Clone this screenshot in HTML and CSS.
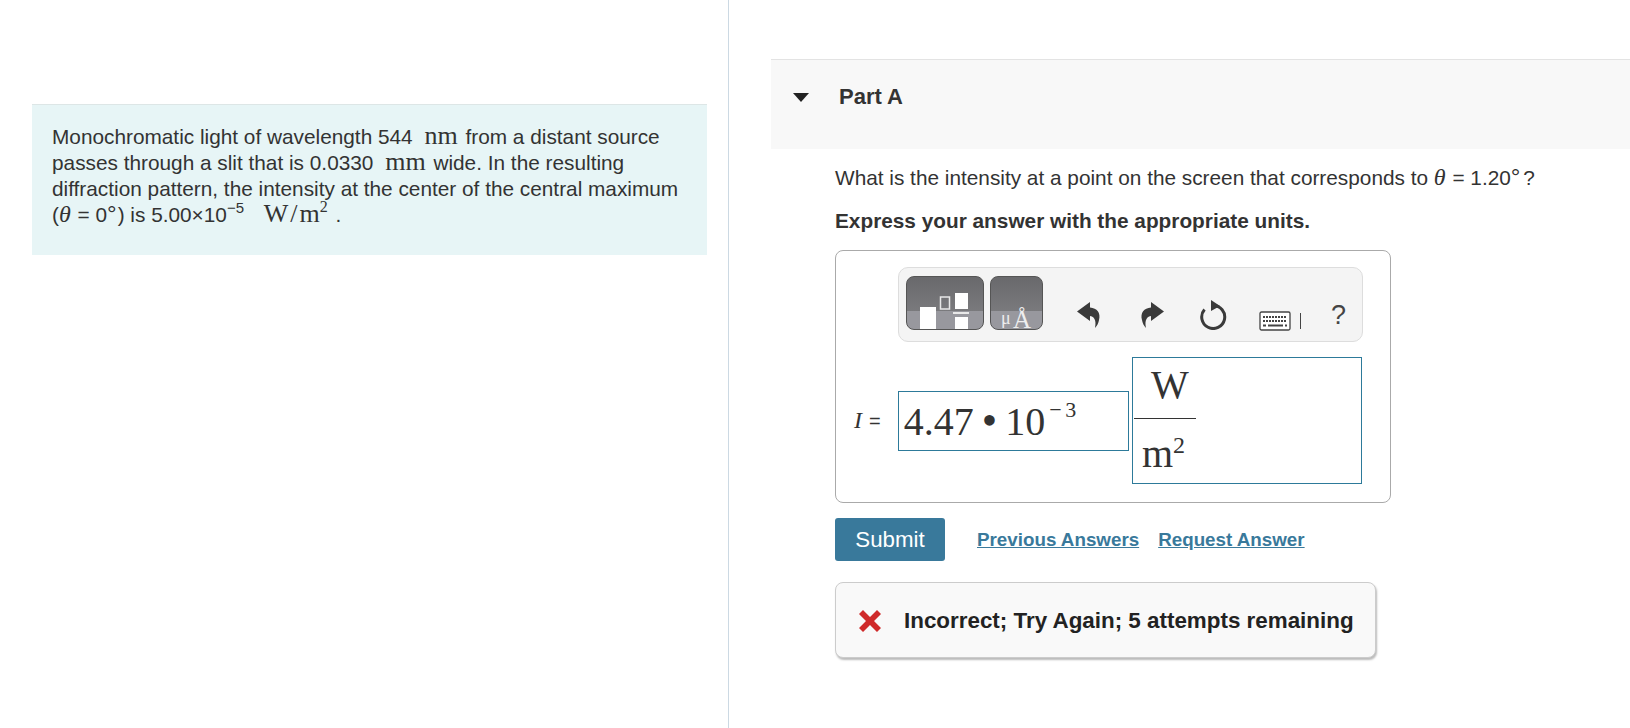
FILE: index.html
```html
<!DOCTYPE html>
<html lang="en">
<head>
    <meta charset="UTF-8">
    <meta name="viewport" content="width=device-width, initial-scale=1.0">
    <title>Part A</title>
    <link rel="stylesheet" href="styles.css">
</head>
<body>
    <div class="page">
        <div class="left-col">
            <div class="intro">
                Monochromatic light of wavelength 544 <span class="unit">nm</span> from a distant source<br>
                passes through a slit that is 0.0330 <span class="unit">mm</span> wide. In the resulting<br>
                diffraction pattern, the intensity at the center of the central maximum<br>
                (<i class="theta">θ</i> = 0<span class="deg">°</span>) is 5.00×10<sup class="exp">−5</sup> <span class="unit unit-wide">W<span class="slash">/</span>m<sup class="unit-exp">2</sup></span> .
            </div>
        </div>
        <div class="right-col">
            <div class="part-head">
                <svg class="caret" width="16" height="9" viewBox="0 0 16 9"><path d="M0 0H16L8 9Z" fill="#222"/></svg>
                <span class="part-title">Part A</span>
            </div>
            <div class="part-body">
                <p class="question">What is the intensity at a point on the screen that corresponds to <i class="theta">θ</i> = 1.20<span class="deg">°</span> ?</p>
                <p class="instruct">Express your answer with the appropriate units.</p>
                <div class="answer-box">
                    <div class="toolbar">
                        <div class="tpl-btn tpl-wide">
                            <svg width="77" height="53" viewBox="0 0 77 53">
                                <rect x="13" y="30" width="16" height="22" fill="#fff"/>
                                <rect x="33.5" y="20" width="9" height="12" fill="none" stroke="#e8e8e8" stroke-width="1.5"/>
                                <rect x="48" y="16" width="13" height="16" fill="#fff"/>
                                <rect x="46" y="35" width="16" height="2" fill="#e8e8e8"/>
                                <rect x="48" y="40" width="13" height="12" fill="#fff"/>
                            </svg>
                        </div>
                        <div class="tpl-btn tpl-narrow">
                            <span class="mu">μ</span><span class="angstrom">Å</span>
                        </div>
                        <div class="tool-icons">
                            <svg class="tool undo" width="24" height="26" viewBox="0 0 24 26"><path d="M0 9.5L13 0V5.5C20 6 24 11 22 18C21.5 21 20 24 18 26C19 21 19 15 13 14V19Z" fill="#3a3a3a"/></svg>
                            <svg class="tool redo" width="24" height="26" viewBox="0 0 24 26"><path transform="matrix(-1 0 0 1 24 0)" d="M0 9.5L13 0V5.5C20 6 24 11 22 18C21.5 21 20 24 18 26C19 21 19 15 13 14V19Z" fill="#3a3a3a"/></svg>
                            <svg class="tool reload" width="28" height="30" viewBox="0 0 28 30"><path d="M14 5.5A11.5 11.5 0 1 1 5.5 9.5" fill="none" stroke="#3a3a3a" stroke-width="3"/><path d="M12 0L21 6L12 11Z" fill="#3a3a3a"/></svg>
                            <svg class="keys" width="42" height="20" viewBox="0 0 42 20">
                                <rect x="1" y="1" width="30" height="18" rx="1.5" fill="#fff" stroke="#444" stroke-width="1.3"/>
                                <path d="M4 6H28M4 10H28" stroke="#444" stroke-width="2" stroke-dasharray="2 1"/>
                                <path d="M9 14.5H24" stroke="#444" stroke-width="2"/>
                                <path d="M4 14.5H7M26 14.5H28" stroke="#444" stroke-width="2"/>
                                <path d="M41.5 2V18" stroke="#444" stroke-width="1"/>
                            </svg>
                            <span class="help">?</span>
                        </div>
                    </div>
                    <div class="equation">
                        <span class="eq-label"><i>I</i><span class="eq-sign">=</span></span>
                        <div class="value-box">4.47 <span class="dot">•</span> 10<sup class="value-exp">− 3</sup></div>
                        <div class="units-box">
                            <div class="fraction">
                                <span class="numer">W</span>
                                <span class="denom">m<sup class="denom-exp">2</sup></span>
                            </div>
                        </div>
                    </div>
                </div>
                <div class="actions">
                    <button class="submit">Submit</button>
                    <a class="action-link" href="#">Previous Answers</a>
                    <a class="action-link" href="#">Request Answer</a>
                </div>
                <div class="feedback">
                    <svg width="24" height="24" viewBox="0 0 24 24"><path d="M5 1L12 8L19 1L23 5L16 12L23 19L19 23L12 16L5 23L1 19L8 12L1 5Z" fill="#cf2a2a"/></svg>
                    <span>Incorrect; Try Again; 5 attempts remaining</span>
                </div>
            </div>
        </div>
    </div>
</body>
</html>
```

FILE: styles.css
```css
* {
    box-sizing: border-box;
}

body {
    margin: 0;
    font-family: "Liberation Sans", Arial, sans-serif;
    color: #333;
    background: #fff;
}

.page {
    display: flex;
    height: 728px;
    overflow: hidden;
}

.left-col {
    width: 729px;
    flex-shrink: 0;
    padding: 104px 21px 0 32px;
    border-right: 1px solid #ccd9e3;
}

.intro {
    height: 151px;
    padding: 19px 20px 0;
    background: #e7f5f6;
    border-top: 1px solid #dde6e6;
    font-size: 20.8px;
    line-height: 26px;
    white-space: nowrap;
}

.unit {
    margin: 0 2px 0 6px;
    font-family: "Liberation Serif", serif;
    font-size: 26px;
    line-height: 0;
}

.unit-wide {
    margin-left: 14px;
}

.slash {
    margin: 0 2px;
}

.theta {
    margin-right: 1px;
    font-family: "Liberation Serif", serif;
    font-size: 24px;
    line-height: 0;
}

.deg {
    margin-right: 1px;
    font-size: 24px;
    line-height: 0;
}

.question .deg {
    margin-right: -3px;
}

.exp {
    font-size: 15px;
    line-height: 0;
    vertical-align: 9px;
}

.unit-exp {
    font-size: 16px;
    line-height: 0;
}

.right-col {
    flex: 1;
    padding: 59px 0 0 42px;
}

.part-head {
    display: flex;
    align-items: flex-start;
    height: 90px;
    padding: 24px 0 0 22px;
    background: #f8f8f8;
    border-top: 1px solid #e3e3e3;
}

.caret {
    margin-top: 9px;
}

.part-title {
    margin-left: 30px;
    font-size: 22px;
    line-height: 26px;
    font-weight: bold;
}

.part-body {
    padding: 16px 0 0 64px;
}

.question {
    margin: 0;
    font-size: 20.8px;
    line-height: 26px;
}

.instruct {
    margin: 17px 0 0;
    font-size: 20.8px;
    line-height: 26px;
    font-weight: bold;
}

.answer-box {
    width: 556px;
    height: 253px;
    margin-top: 16px;
    padding: 16px 28px 0 62px;
    border: 1px solid #aaa;
    border-radius: 8px;
}

.toolbar {
    display: flex;
    align-items: flex-start;
    gap: 6px;
    width: 465px;
    height: 75px;
    padding: 8px 0 0 7px;
    background: #f4f4f4;
    border: 1px solid #ddd;
    border-radius: 10px;
}

.tpl-btn {
    height: 54px;
    border: 1px solid #555;
    border-radius: 8px;
    background: linear-gradient(#69696c 0, #7a7a7d 66%, #98989e 66%);
}

.tpl-wide {
    width: 78px;
    overflow: hidden;
}

.tpl-wide svg {
    display: block;
}

.tpl-narrow {
    position: relative;
    width: 53px;
    font-family: "Liberation Serif", serif;
    color: #eee;
}

.mu {
    position: absolute;
    left: 10px;
    bottom: 4px;
    font-size: 18px;
    line-height: 14px;
}

.angstrom {
    position: absolute;
    left: 22px;
    bottom: 0;
    font-size: 25px;
    line-height: 18px;
}

.tool-icons {
    display: flex;
    align-items: center;
    height: 52px;
    margin-top: 13px;
    margin-left: 28px;
}

.redo {
    margin-left: 39px;
}

.reload {
    margin-left: 35px;
}

.keys {
    margin-left: 32px;
    margin-top: 12px;
}

.help {
    margin-left: 30px;
    font-size: 27px;
    color: #444;
}

.equation {
    display: flex;
    align-items: center;
    margin-top: 15px;
    margin-left: -62px;
    padding-left: 18px;
}

.eq-label {
    width: 44px;
    font-family: "Liberation Serif", serif;
    font-size: 24px;
    white-space: nowrap;
}

.eq-sign {
    margin-left: 7px;
    font-family: "Liberation Sans", Arial, sans-serif;
    font-size: 20px;
}

.value-box {
    width: 232px;
    height: 60px;
    margin-right: 3px;
    padding: 2px 0 0 5px;
    border: 1px solid #2d7a9a;
    font-family: "Liberation Serif", serif;
    font-size: 40px;
    line-height: 56px;
    word-spacing: -2px;
    white-space: nowrap;
}

.dot {
    font-size: 44px;
    line-height: 0;
}

.value-exp {
    font-size: 22px;
    line-height: 0;
    vertical-align: 18px;
    margin-left: 4px;
}

.units-box {
    width: 231px;
    height: 127px;
    padding: 0 0 0 1px;
    border: 1px solid #2d7a9a;
    font-family: "Liberation Serif", serif;
    font-size: 40px;
}

.fraction {
    display: flex;
    flex-direction: column;
    align-items: flex-start;
    width: 62px;
}

.numer {
    width: 100%;
    height: 61px;
    padding: 2px 0 0 10px;
    line-height: 50px;
    text-align: center;
    border-bottom: 1px solid #333;
}

.denom {
    padding: 5px 0 0 8px;
    line-height: 60px;
}

.denom-exp {
    font-size: 24px;
    line-height: 0;
}

.actions {
    display: flex;
    align-items: center;
    margin-top: 15px;
}

.submit {
    width: 110px;
    height: 43px;
    border: none;
    border-radius: 3px;
    background: #39799b;
    color: #fff;
    font-family: "Liberation Sans", Arial, sans-serif;
    font-size: 22.3px;
}

.action-link {
    margin-left: 32px;
    color: #39799b;
    font-size: 18.8px;
    font-weight: bold;
}

.action-link + .action-link {
    margin-left: 19px;
}

.feedback {
    display: flex;
    align-items: center;
    gap: 22px;
    width: 541px;
    height: 76px;
    margin-top: 21px;
    padding: 2px 0 0 22px;
    background: #f9f9f9;
    border: 1px solid #ccc;
    border-radius: 8px;
    box-shadow: 1px 2px 2px #bbb;
    color: #222;
    font-size: 22.4px;
    font-weight: bold;
    white-space: nowrap;
}
```
